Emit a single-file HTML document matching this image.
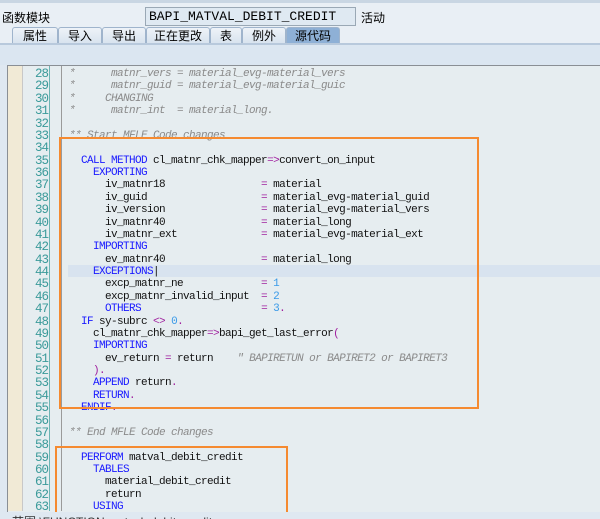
<!DOCTYPE html>
<html><head><meta charset="utf-8"><style>
body{margin:0;width:600px;height:519px;overflow:hidden;background:#dfe8f1;font-family:"Liberation Sans","Noto Sans CJK SC",sans-serif;position:relative}
.a{position:absolute}
.tab{position:absolute;top:27px;height:16px;font-size:12px;line-height:16px;text-align:center;background:linear-gradient(#eef3f8,#d7e2ee);border:1px solid #9fb4cc;border-bottom:none;border-radius:3px 3px 0 0;color:#000}
pre{margin:0;font-family:"Liberation Mono",monospace;font-size:11px;letter-spacing:-0.6px;line-height:12.37px;color:#111}
.k{color:#1a1aff}.c{color:#8a8a8a;font-style:italic}.o{color:#a0209f}.n{color:#3a9ae8}
.ln{color:#3a9a9a;text-align:right;font-size:12.5px;letter-spacing:-1px}
</style></head><body>
<div class="a" style="left:0;top:0;width:600px;height:3px;background:#c9d6e3"></div>
<div class="a" style="left:0;top:3px;width:600px;height:40px;background:#e9eff5"></div>
<div class="a" style="left:2px;top:9px;font-size:12px">函数模块</div>
<div class="a" style="left:145px;top:7px;background:#dfe9f2;border:1px solid #9aa8b5;font-family:'Liberation Mono',monospace;font-size:13px;line-height:17px;padding-left:3px;box-sizing:border-box;width:211px;height:19px">BAPI_MATVAL_DEBIT_CREDIT</div>
<div class="a" style="left:361px;top:9px;font-size:12px">活动</div>
<div class="tab" style="left:12px;width:44px">属性</div>
<div class="tab" style="left:58px;width:42px">导入</div>
<div class="tab" style="left:102px;width:42px">导出</div>
<div class="tab" style="left:146px;width:62px">正在更改</div>
<div class="tab" style="left:210px;width:30px">表</div>
<div class="tab" style="left:242px;width:42px">例外</div>
<div class="tab" style="left:286px;width:52px;background:#8eb0d6">源代码</div>
<div class="a" style="left:0;top:43px;width:600px;height:2px;background:#b8c9dc"></div>
<div class="a" style="left:0;top:45px;width:600px;height:20px;background:#dbe6f1"></div>
<div class="a" style="left:7px;top:65px;width:593px;height:446px;background:#e6edf0;border-top:1px solid #8a8f95;border-left:1px solid #8a8f95"></div>
<div class="a" style="left:8px;top:66px;width:14px;height:445px;background:#f1ead6"></div>
<div class="a" style="left:22px;top:66px;width:1px;height:445px;background:#c8c8c8"></div>
<div class="a" style="left:49px;top:66px;width:1px;height:445px;background:#6cb4b4"></div>
<div class="a" style="left:61px;top:66px;width:1px;height:445px;background:#9a9a9a"></div>
<div class="a" style="left:68px;top:265px;width:532px;height:12px;background:#d8e3ef"></div>
<pre class="a ln" style="left:20px;top:68px;width:28px">28
29
30
31
32
33
34
35
36
37
38
39
40
41
42
43
44
45
46
47
48
49
50
51
52
53
54
55
56
57
58
59
60
61
62
63</pre>
<pre class="a" style="left:69px;top:68px"><span class="c">*      matnr_vers = material_evg-material_vers
*      matnr_guid = material_evg-material_guic
*     CHANGING
*      matnr_int  = material_long.</span>

<span class="c">** Start MFLE Code changes</span>

  <span class="k">CALL METHOD</span> cl_matnr_chk_mapper<span class="o">=&gt;</span>convert_on_input
    <span class="k">EXPORTING</span>
      iv_matnr18                <span class="o">=</span> material
      iv_guid                   <span class="o">=</span> material_evg-material_guid
      iv_version                <span class="o">=</span> material_evg-material_vers
      iv_matnr40                <span class="o">=</span> material_long
      iv_matnr_ext              <span class="o">=</span> material_evg-material_ext
    <span class="k">IMPORTING</span>
      ev_matnr40                <span class="o">=</span> material_long
    <span class="k">EXCEPTIONS</span>|
      excp_matnr_ne             <span class="o">=</span> <span class="n">1</span>
      excp_matnr_invalid_input  <span class="o">=</span> <span class="n">2</span>
      <span class="k">OTHERS</span>                    <span class="o">=</span> <span class="n">3</span><span class="o">.</span>
  <span class="k">IF</span> sy-subrc <span class="o">&lt;&gt;</span> <span class="n">0</span><span class="o">.</span>
    cl_matnr_chk_mapper<span class="o">=&gt;</span>bapi_get_last_error<span class="o">(</span>
    <span class="k">IMPORTING</span>
      ev_return <span class="o">=</span> return    <span class="c">" BAPIRETUN or BAPIRET2 or BAPIRET3</span>
    <span class="o">).</span>
    <span class="k">APPEND</span> return<span class="o">.</span>
    <span class="k">RETURN</span><span class="o">.</span>
  <span class="k">ENDIF</span><span class="o">.</span>

<span class="c">** End MFLE Code changes</span>

  <span class="k">PERFORM</span> matval_debit_credit
    <span class="k">TABLES</span>
      material_debit_credit
      return
    <span class="k">USING</span></pre>
<div class="a" style="left:59px;top:137px;width:420px;height:272px;border:2px solid #f58a30;box-sizing:border-box"></div>
<div class="a" style="left:55px;top:446px;width:233px;height:72px;border:2px solid #f58a30;box-sizing:border-box"></div>
<div class="a" style="left:0;top:512px;width:600px;height:7px;background:#dfe8f1;overflow:hidden"><div style="font-size:12px;line-height:12px;margin-top:4px;padding-left:12px;color:#333">范围 \FUNCTION matval_debit_credit</div></div>
</body></html>
